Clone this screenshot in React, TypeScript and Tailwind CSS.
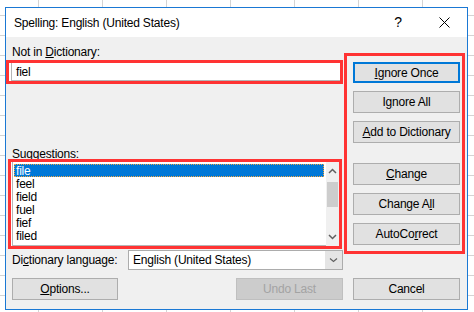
import React from "react";

const font = { fontFamily: '"Liberation Sans", Arial, sans-serif' };

function Btn({
  children,
  className = "",
  variant = "normal",
}: {
  children: React.ReactNode;
  className?: string;
  variant?: "normal" | "focus" | "disabled";
}) {
  const v =
    variant === "focus"
      ? "h-[21px] bg-[#e1e1e1] border-2 border-[#0078d7] text-black"
      : variant === "disabled"
      ? "h-[22px] bg-[#cccccc] border border-[#bfbfbf] text-[#a3a3a3]"
      : "h-[22px] bg-[#e1e1e1] border border-[#adadad] text-black";
  return (
    <div
      className={
        "flex items-center justify-center text-[12px] tracking-[-0.2px] leading-none " + v + " " + className
      }
    >
      {children}
    </div>
  );
}

export default function App() {
  const items = ["file", "feel", "field", "fuel", "fief", "filed"];
  return (
    <div
      style={font}
      className="w-[474px] h-[312px] overflow-hidden bg-white bg-[linear-gradient(to_right,#d4d4d4_1px,transparent_1px),linear-gradient(to_bottom,#d4d4d4_1px,transparent_1px)] bg-[size:64px_20px] bg-[position:38px_15px] pl-[5px] pt-[7px]"
    >
      <div className="w-[463px] h-[303px] border border-[#1a78d4] flex flex-col bg-[#f0f0f0] text-black text-[12px] tracking-[-0.2px]">
        {/* title bar */}
        <div className="h-[29px] bg-white flex items-center shrink-0">
          <div className="pl-[8px] text-[12px]">Spelling: English (United States)</div>
          <div className="ml-auto w-[46px] h-full flex items-center justify-center text-[14px]">?</div>
          <div className="w-[46px] h-full flex items-center justify-center">
            <svg width="11" height="11" viewBox="0 0 11 11">
              <path d="M0.5 0.5 L10.5 10.5 M10.5 0.5 L0.5 10.5" stroke="#000" strokeWidth="1" fill="none" />
            </svg>
          </div>
        </div>
        {/* body */}
        <div className="flex flex-1">
          {/* left column */}
          <div className="w-[338px] flex flex-col">
            <div className="mt-[7px] h-[16px] leading-[16px] pl-[6px]">
              Not in <u>D</u>ictionary:
            </div>
            <div className="w-[337px] h-[24px] border-[3px] border-[#ff3333] bg-white">
              <div className="ml-[2px] h-full border-l border-b border-[#b5b5b5] pl-[4px] flex items-center">
                fiel
              </div>
            </div>
            <div className="mt-[65px] h-[10px] leading-[11px] pl-[6px]">Suggestions:</div>
            <div className="ml-[2px] w-[334px] h-[90px] border-[3px] border-[#ff3333] bg-white flex">
              <div className="flex-1 ml-[1px] border-l border-b border-[#b5b5b5] pl-[1px] pr-[2px] pt-[2px]">
                {items.map((it, i) => (
                  <div
                    key={it}
                    className={
                      "h-[13px] leading-[14px] pl-[2px] " +
                      (i === 0
                        ? "bg-[#0078d7] text-white outline outline-1 outline-dotted outline-[#f2a640] -outline-offset-1"
                        : "")
                    }
                  >
                    {it}
                  </div>
                ))}
              </div>
              <div className="w-[13px] bg-[#f0f0f0] flex flex-col items-center">
                <svg width="13" height="17" viewBox="0 0 13 17" className="shrink-0">
                  <path d="M3 11 L6.5 7.5 L10 11" stroke="#606060" strokeWidth="1.5" fill="none" />
                </svg>
                <div className="w-[11px] h-[25px] bg-[#cdcdcd] mt-[3px]" />
                <div className="flex-1" />
                <svg width="13" height="17" viewBox="0 0 13 17" className="shrink-0">
                  <path d="M3 6 L6.5 9.5 L10 6" stroke="#606060" strokeWidth="1.5" fill="none" />
                </svg>
              </div>
            </div>
            <div className="mt-[1px] h-[20px] flex items-center">
              <div className="pl-[6px] w-[122px]">
                Di<u>c</u>tionary language:
              </div>
              <div className="w-[215px] h-[20px] bg-white border border-[#acacac] flex items-center">
                <div className="flex-1 pl-[4px]">English (United States)</div>
                <div className="w-[17px] h-full bg-[#e5e5e5] flex items-center justify-center">
                  <svg width="9" height="6" viewBox="0 0 9 6">
                    <path d="M1 1.5 L4.5 4.5 L8 1.5" stroke="#606060" strokeWidth="1.2" fill="none" />
                  </svg>
                </div>
              </div>
            </div>
            <div className="mt-[8px] flex">
              <Btn className="ml-[6px] w-[106px]">
                <span>
                  <u>O</u>ptions...
                </span>
              </Btn>
              <Btn variant="disabled" className="ml-[118px] w-[107px]">
                Undo Last
              </Btn>
            </div>
          </div>
          {/* right column */}
          <div className="flex flex-col">
            <div className="mt-[16px] w-[121px] h-[201px] border-[3px] border-[#ff3333] pl-[6px] pt-[6px] flex flex-col">
              <Btn variant="focus" className="w-[107px]">
                <span>
                  <u>I</u>gnore Once
                </span>
              </Btn>
              <Btn className="mt-[8px] w-[107px]">
                <span>
                  I<u>g</u>nore All
                </span>
              </Btn>
              <Btn className="mt-[8px] w-[107px]">
                <span>
                  <u>A</u>dd to Dictionary
                </span>
              </Btn>
              <Btn className="mt-[20px] w-[107px]">
                <span>
                  <u>C</u>hange
                </span>
              </Btn>
              <Btn className="mt-[8px] w-[107px]">
                <span>
                  Change A<u>l</u>l
                </span>
              </Btn>
              <Btn className="mt-[8px] w-[107px]">
                <span>
                  AutoCo<u>r</u>rect
                </span>
              </Btn>
            </div>
            <Btn className="ml-[9px] mt-[24px] w-[107px]">Cancel</Btn>
          </div>
        </div>
      </div>
    </div>
  );
}
